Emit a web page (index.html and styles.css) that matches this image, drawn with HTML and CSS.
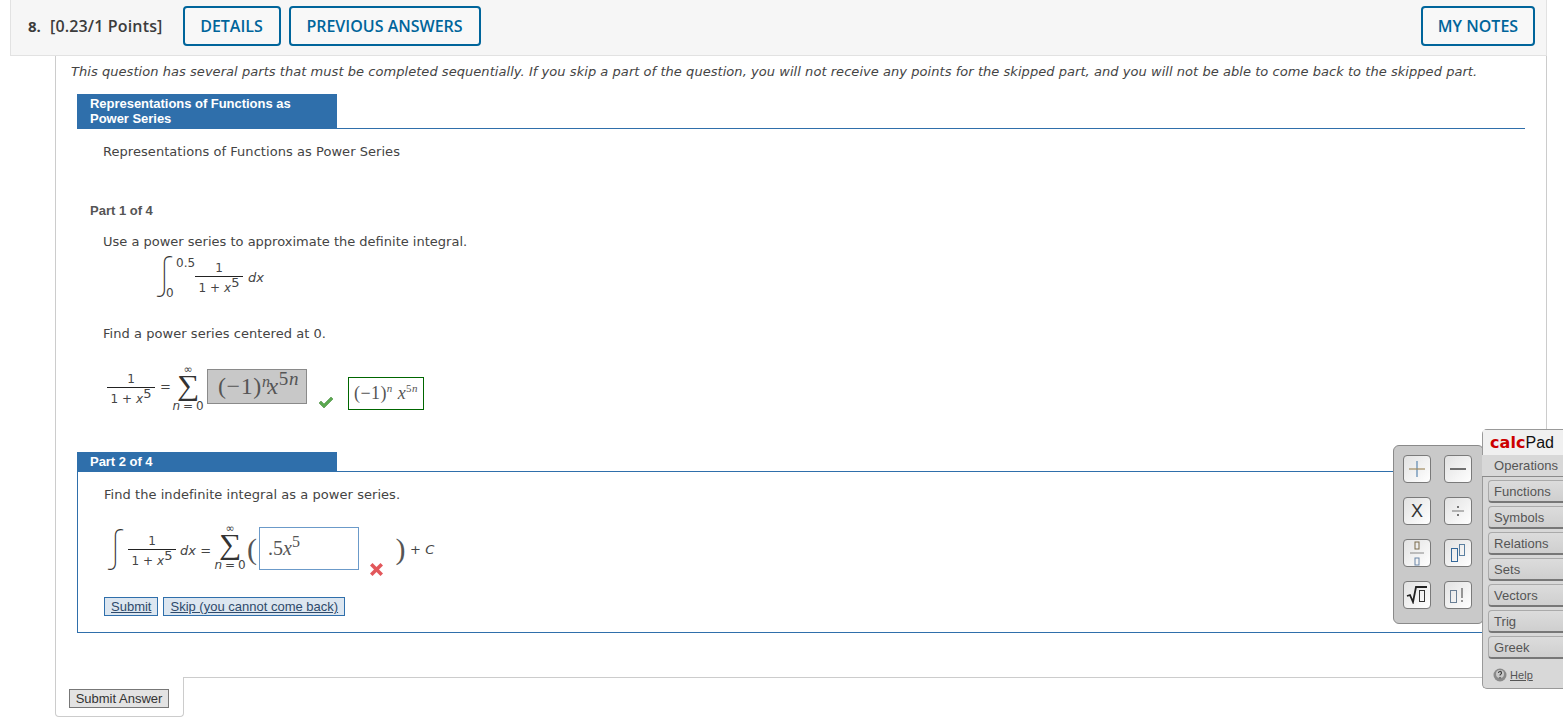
FILE: index.html
```html
<!DOCTYPE html>
<html lang="en">
<head>
<meta charset="utf-8">
<title>Question 8</title>
<link rel="stylesheet" href="styles.css">
</head>
<body>
<div class="question">
  <header class="qhead">
    <span class="qnum">8.</span>
    <span class="qpoints">[0.23/1 Points]</span>
    <a class="qbtn first">DETAILS</a>
    <a class="qbtn second">PREVIOUS ANSWERS</a>
    <a class="qbtn notes">MY NOTES</a>
  </header>
  <div class="content">
    <p class="intro">This question has several parts that must be completed sequentially. If you skip a part of the question, you will not receive any points for the skipped part, and you will not be able to come back to the skipped part.</p>
    <div class="tabline"><h2 class="tab">Representations of Functions as<br>Power Series</h2></div>
    <p class="txt sub">Representations of Functions as Power Series</p>
    <h3 class="parttitle">Part 1 of 4</h3>
    <p class="txt use">Use a power series to approximate the definite integral.</p>
    <div class="defint">
      <span class="intsign">∫</span>
      <span class="limits"><span class="lim-up">0.5</span><span class="lim-low">0</span></span>
      <span class="frac"><span class="num">1</span><span class="den">1 + <i>x</i><sup>5</sup></span></span>
      <span class="dx"><i>dx</i></span>
    </div>
    <p class="txt find">Find a power series centered at 0.</p>
    <div class="series first-row">
      <span class="frac"><span class="num">1</span><span class="den">1 + <i>x</i><sup>5</sup></span></span>
      <span class="eq">=</span>
      <span class="sum"><span class="inf">∞</span><span class="sigma">∑</span><span class="low"><i>n</i> = 0</span></span>
      <span class="ansgrey"><span class="m">(−1)<sup class="m1"><i>n</i></sup><i class="mx">x</i><sup class="m2">5<i>n</i></sup></span></span>
      <svg class="check" width="16" height="13" viewBox="0 0 16 13"><path d="M1 7l2-2 3 3 7-7 2 2-9 9z" fill="#5aa84f" stroke="#4b8f43" stroke-width=".6"/></svg>
      <span class="correct"><span class="m">(−1)<sup><i>n</i></sup> <i>x</i><sup>5<i>n</i></sup></span></span>
    </div>
    <section class="part2">
      <div class="tabline small"><h2 class="tab">Part 2 of 4</h2></div>
      <div class="part2body">
        <p class="txt p2text">Find the indefinite integral as a power series.</p>
        <div class="series second-row">
          <span class="intsign mid">∫</span>
          <span class="frac"><span class="num">1</span><span class="den">1 + <i>x</i><sup>5</sup></span></span>
          <span class="dx2"><i>dx</i> =</span>
          <span class="sum"><span class="inf">∞</span><span class="sigma">∑</span><span class="low"><i>n</i> = 0</span></span>
          <span class="paren">(</span>
          <span class="ansinput"><span class="m">.5<i>x</i><sup>5</sup></span></span>
          <svg class="cross" width="15" height="15" viewBox="0 0 15 15"><path d="M3.500 1L7.500 5 11.500 1 14 3.500 10 7.500 14 11.500 11.500 14 7.500 10 3.500 14 1 11.500 5 7.500 1 3.500z" fill="#e2575b"/></svg>
          <span class="paren close">)</span>
          <span class="plusc">+ <i>C</i></span>
        </div>
        <div class="actions">
          <a class="actbtn">Submit</a>
          <a class="actbtn">Skip (you cannot come back)</a>
        </div>
      </div>
    </section>
  </div>
  <footer class="foot">
    <div class="footleft"><button class="submit">Submit Answer</button></div>
    <div class="footright"></div>
  </footer>
</div>

<aside class="keypad">
  <span class="key"><svg width="16" height="16" viewBox="0 0 16 16"><path d="M8 0v16" stroke="#5a86b0" stroke-width="1.200"/><path d="M0 8h16" stroke="#a08a60" stroke-width="1.200"/></svg></span>
  <span class="key"><svg width="16" height="4" viewBox="0 0 16 4"><path d="M0 2h16" stroke="#444" stroke-width="1.500"/></svg></span>
  <span class="key keyx">X</span>
  <span class="key"><svg width="14" height="12" viewBox="0 0 14 12"><path d="M1 6h12" stroke="#777" stroke-width="1"/><rect x="6" y="1" width="2" height="2" fill="#777"/><rect x="6" y="9" width="2" height="2" fill="#777"/></svg></span>
  <span class="key"><svg width="14" height="26" viewBox="0 0 14 26"><rect x="5" y="2" width="4" height="7" fill="none" stroke="#7a6a4a"/><path d="M0 13h14" stroke="#888"/><rect x="5" y="18" width="4" height="7" fill="none" stroke="#6a86a8"/></svg></span>
  <span class="key"><svg width="15" height="18" viewBox="0 0 15 18"><rect x=".5" y="4.500" width="6" height="13" fill="none" stroke="#34689a"/><rect x="8.500" y=".5" width="5" height="11" fill="none" stroke="#5a7fa0"/></svg></span>
  <span class="key"><svg width="22" height="18" viewBox="0 0 22 18"><path d="M1 10l3-1 3 7 3-15h11" fill="none" stroke="#222" stroke-width="1.800"/><rect x="13.500" y="4.500" width="5" height="11" fill="none" stroke="#333"/></svg></span>
  <span class="key"><svg width="16" height="16" viewBox="0 0 16 16"><rect x=".5" y="3.500" width="6" height="12" fill="none" stroke="#6a7f95"/><path d="M12 1v10M12 13v2" stroke="#777" stroke-width="1.500"/></svg></span>
</aside>
<aside class="calcpad">
  <div class="logo"><b>calc</b>Pad</div>
  <div class="optab">Operations</div>
  <ul class="cats">
    <li>Functions</li>
    <li>Symbols</li>
    <li>Relations</li>
    <li>Sets</li>
    <li>Vectors</li>
    <li>Trig</li>
    <li>Greek</li>
  </ul>
  <div class="help"><svg width="14" height="14" viewBox="0 0 14 14"><circle cx="7" cy="7" r="6.500" fill="#8a8a8a"/><circle cx="7" cy="6" r="4" fill="#c8c8c8"/><path d="M5.500 5a1.500 1.500 0 1 1 2.200 1.300c-.5.300-.7.600-.7 1.200M7 9v1.300" fill="none" stroke="#444" stroke-width="1.200"/></svg><a>Help</a></div>
</aside>
</body>
</html>
```
FILE: styles.css
```css
* { box-sizing: border-box; }
html, body { margin: 0; padding: 0; }
body {
  width: 1566px;
  height: 727px;
  overflow: hidden;
  position: relative;
  background: #fff;
  color: #444;
  font-family: "DejaVu Sans", sans-serif;
  font-size: 13px;
  letter-spacing: .05px;
}
i { font-style: italic; }
p, h2, h3, ul { margin: 0; padding: 0; }

.question { width: 1547px; padding-left: 10px; }

.qhead {
  display: flex;
  align-items: flex-start;
  height: 56px;
  padding: 6px 11px 0 17px;
  background: #f6f6f6;
  border: 1px solid #e2e2e2;
  border-top: 0;
  font-family: "Open Sans", sans-serif;
  font-weight: 600;
  font-size: 16px;
  color: #3c3c3c;
  letter-spacing: 0;
}
.qnum { width: 22px; font-weight: 700; font-size: 15px; line-height: 40px; }
.qpoints { line-height: 40px; letter-spacing: .15px; }
.qbtn {
  display: flex;
  align-items: center;
  justify-content: center;
  height: 40px;
  margin-left: 8px;
  border: 2px solid #00659b;
  border-radius: 4px;
  color: #00659b;
  font-weight: 600;
  font-size: 16px;
  background: #f8f8f8;
}
.qbtn.first { width: 98px; margin-left: 20px; }
.qbtn.second { width: 192px; }
.qbtn.notes { width: 114px; margin-left: auto; }

.content {
  margin-left: 45px;
  height: 621px;
  padding-top: 6px;
  border-left: 1px solid #ccc;
  border-right: 1px solid #ccc;
}
.intro {
  margin: 0 0 0 15px;
  height: 20px;
  line-height: 20px;
  font-style: italic;
  font-size: 13px;
  white-space: nowrap;
}
.tabline {
  margin: 12px 21px 0 21px;
  border-bottom: 1px solid #2f6fab;
}
.tab {
  width: 260px;
  height: 35px;
  margin-bottom: -1px;
  padding: 2px 13px 0;
  background: #2f6fab;
  color: #fff;
  font: 700 13px/15px "Liberation Sans", sans-serif;
  letter-spacing: -.03px;
}
.txt { line-height: 18px; height: 18px; white-space: nowrap; }
.sub { margin: 14px 0 0 47px; }
.parttitle {
  margin: 41px 0 0 34px;
  height: 18px;
  font: 700 13px/18px "Liberation Sans", sans-serif;
  letter-spacing: 0;
  color: #555;
}
.use { margin: 13px 0 0 47px; letter-spacing: 0; }

.defint {
  display: flex;
  align-items: center;
  height: 48px;
  margin: 3px 0 0 96px;
}
.intsign {
  font: 100 42px/48px "Roboto", sans-serif;
  width: 12px;
  margin: -8px 0 0 8px;
  color: #333;
}
.limits {
  display: flex;
  flex-direction: column;
  justify-content: space-between;
  height: 44px;
  width: 23px;
  font-size: 12px;
  line-height: 14px;
}
.lim-up { padding-left: 4px; }
.lim-low { margin-left: -6px; }
.frac {
  display: inline-flex;
  flex-direction: column;
  align-items: center;
  width: 48px;
  font-size: 12px;
  line-height: 15px;
}
.num { width: 100%; text-align: center; border-bottom: 1px solid #222; }
.den { padding-top: 4px; white-space: nowrap; }
.frac sup { font-size: 13px; line-height: 0; vertical-align: 5px; }
.dx { margin: -2px 0 0 5px; }

.find { margin: 23px 0 0 47px; }

.series {
  display: flex;
  align-items: center;
  height: 56px;
  margin: 15px 0 0 51px;
}
.first-row .frac { margin-top: 7px; }
.second-row .frac { margin-top: 3px; }
.eq { margin: 0 0 0 5px; width: 12px; }
.sum {
  display: inline-flex;
  flex-direction: column;
  align-items: center;
  width: 30px;
  margin: 6px 0 0 1px;
  height: 50px;
  font-size: 11px;
}
.inf { height: 12px; line-height: 12px; }
.sigma {
  font: 26px/20px "Liberation Serif", serif;
  height: 23px;
  color: #333;
  transform: scale(1.2, 1.1);
}
.low { font-size: 12px; line-height: 15px; white-space: nowrap; word-spacing: -1px; }
.m { font-family: "Liberation Serif", serif; color: #555; white-space: nowrap; }
.m sup { line-height: 0; }
.ansgrey {
  display: flex;
  align-items: center;
  width: 100px;
  height: 35px;
  margin: 0 0 0 4px;
  padding: 1px 0 0 10px;
  background: #c8c8c8;
  border: 1px solid #8a8a8a;
  font-size: 24px;
  letter-spacing: .6px;
}
.m1 { font-size: 16px; vertical-align: 7px; }
.mx { margin-left: -3px; }
.m2 { font-size: 19px; vertical-align: 9px; }
.check { margin: 33px 0 0 11px; }
.correct {
  display: flex;
  align-items: center;
  justify-content: center;
  width: 76px;
  height: 33px;
  margin: 14px 0 0 14px;
  border: 1px solid #060;
  font-size: 18px;
  letter-spacing: .4px;
}
.correct sup { font-size: 11px; vertical-align: 7px; }

.part2 { margin: 38px 21px 0 21px; }
.tabline.small { margin: 0; }
.tabline.small .tab { height: 20px; padding-top: 2px; line-height: 15px; }
.part2body {
  height: 161px;
  border: 1px solid #2f6fab;
  border-top: 0;
  padding: 14px 0 0 26px;
}
.p2text { margin: 0; }
.series.second-row { margin: 18px 0 0 3px; }
.intsign.mid { width: 17px; margin: -6px 0 0 4px; }
.dx2 { margin-left: 4px; width: 35px; white-space: nowrap; }
.second-row .sum { margin: -4px 0 0 0; }
.paren {
  width: 14px;
  text-align: center;
  font: 30px/36px "Liberation Serif", serif;
  margin-top: -2px;
  color: #555;
}
.ansinput {
  display: flex;
  align-items: center;
  width: 100px;
  height: 43px;
  margin: -3px 0 0 0;
  padding-left: 8px;
  border: 1px solid #6b9ac9;
  background: #fff;
  font-size: 20px;
}
.ansinput sup { font-size: 16px; vertical-align: 8px; }
.cross { margin: 38px 0 0 10px; }
.paren.close { width: 11px; margin-left: 11px; }
.plusc { margin: -2px 0 0 4px; white-space: nowrap; }

.actions { display: flex; gap: 5px; margin: 19px 0 0 0; }
.actbtn {
  height: 19px;
  padding: 0 6px;
  font: 13px/18px "Liberation Sans", sans-serif;
  letter-spacing: 0;
  color: #2e4a6b;
  text-decoration: underline;
  background: #dce6f0;
  border: 1px solid #2f6fab;
  white-space: nowrap;
}

.foot { display: flex; height: 40px; margin-left: 45px; }
.footleft {
  width: 129px;
  height: 40px;
  padding: 12px 0 0 13px;
  border: 1px solid #ccc;
  border-top: 0;
  border-radius: 0 0 4px 4px;
}
.footright { flex: 1; border-top: 1px solid #ccc; }
.submit {
  display: block;
  width: 100px;
  height: 19px;
  padding: 0;
  background: #e3e3e3;
  border: 1px solid #777;
  color: #333;
  font: 13px/17px "Liberation Sans", sans-serif;
}

.keypad {
  position: absolute;
  left: 1393px;
  top: 445px;
  width: 91px;
  height: 179px;
  padding: 9px;
  display: grid;
  grid-template-columns: 28px 28px;
  grid-auto-rows: 28px;
  column-gap: 13px;
  row-gap: 14px;
  background: #c9c9c9;
  border: 1px solid #8a8a8a;
  border-radius: 6px;
}
.key {
  display: flex;
  align-items: center;
  justify-content: center;
  background: linear-gradient(135deg, #e2e2e2, #fff);
  border: 1px solid #7a7a7a;
  border-radius: 4px;
}
.keyx { font: 18px "Liberation Sans", sans-serif; color: #333; }

.calcpad {
  position: absolute;
  left: 1482px;
  top: 429px;
  width: 81px;
  height: 260px;
  background: #d8d8d8;
  border: 1px solid #999;
  border-right: 0;
  border-radius: 5px 0 0 5px;
  font-family: "Liberation Sans", sans-serif;
  font-size: 13px;
  color: #555;
}
.logo {
  height: 25px;
  padding-left: 7px;
  background: #f0f0f0;
  font: 16px/26px "Liberation Sans", sans-serif;
  color: #111;
}
.logo b { color: #c00; font-family: "DejaVu Sans", sans-serif; font-size: 16px; font-weight: 700; }
.optab {
  height: 22px;
  padding-left: 12px;
  line-height: 21px;
  background: #d8d8d8;
  border-bottom: 1px solid #8a8a8a;
  margin-left: -1px;
}
.cats { list-style: none; padding: 3px 0 0 5px; }
.cats li {
  height: 23px;
  margin-bottom: 3px;
  padding-left: 5px;
  line-height: 22px;
  background: linear-gradient(#dcdcdc, #cfcfcf);
  border: 1px solid #aaa;
  border-bottom: 2px solid #777;
  border-radius: 4px 0 0 4px;
  border-right: 0;
}
.help { display: flex; align-items: center; gap: 3px; margin: 9px 0 0 10px; font-size: 11px; }
.help a { text-decoration: underline; }
```
